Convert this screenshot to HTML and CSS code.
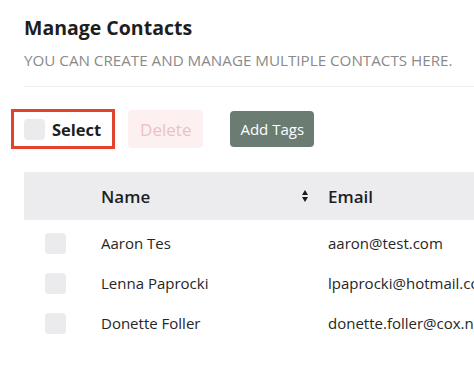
FILE: index.html
```html
<!DOCTYPE html>
<html>
<head>
<meta charset="utf-8">
<link rel="stylesheet" href="styles.css">
</head>
<body>
<main class="page">
  <header class="intro">
    <h1 class="title">Manage Contacts</h1>
    <p class="subtitle">YOU CAN CREATE AND MANAGE MULTIPLE CONTACTS HERE.</p>
  </header>
  <div class="toolbar">
    <label class="select-all"><span class="check"></span><span class="select-label">Select</span></label>
    <button class="btn btn-delete">Delete</button>
    <button class="btn btn-tags">Add Tags</button>
  </div>
  <div class="table">
    <div class="row head">
      <div class="cell"></div>
      <div class="cell name-head">Name
        <svg class="sort" width="6" height="12" viewBox="0 0 6 12"><path d="M3 0 L6 5 L0 5 Z M0 7 L6 7 L3 12 Z" fill="#1b1b1b"/></svg>
      </div>
      <div class="cell">Email</div>
    </div>
    <div class="row">
      <div class="cell"><span class="check"></span></div>
      <div class="cell">Aaron Tes</div>
      <div class="cell">aaron@test.com</div>
    </div>
    <div class="row">
      <div class="cell"><span class="check"></span></div>
      <div class="cell">Lenna Paprocki</div>
      <div class="cell">lpaprocki@hotmail.com</div>
    </div>
    <div class="row">
      <div class="cell"><span class="check"></span></div>
      <div class="cell">Donette Foller</div>
      <div class="cell">donette.foller@cox.net</div>
    </div>
  </div>
</main>
</body>
</html>
```
FILE: styles.css
```css
html, body {
  margin: 0;
  padding: 0;
  background: #ffffff;
}
body {
  font-family: "Open Sans", "Noto Sans", sans-serif;
  color: #222;
  width: 474px;
  height: 372px;
  overflow: hidden;
}
.page {
  padding: 13px 0 0 24px;
  width: 600px;
}
.intro {
  border-bottom: 1px solid #f0f0f0;
  padding-bottom: 16px;
}
.title {
  margin: 0;
  font-size: 19.5px;
  line-height: 30px;
  font-weight: 700;
  color: #1e1e1e;
}
.subtitle {
  margin: 7px 0 0 0;
  font-size: 15.2px;
  line-height: 20px;
  color: #8a8a8a;
  font-weight: 400;
}
.toolbar {
  display: flex;
  align-items: center;
  margin-top: 22px;
  height: 40px;
}
.select-all {
  display: flex;
  align-items: center;
  gap: 7px;
  margin-left: -13px;
  border: 3px solid #e2432c;
  padding: 0 11px 0 10px;
  height: 34px;
}
.check {
  display: inline-block;
  width: 21px;
  height: 21px;
  border-radius: 4px;
  background: #ebebee;
}
.select-label {
  font-size: 16.5px;
  font-weight: 700;
  color: #1e1e1e;
}
.btn {
  font-family: "Open Sans", "Noto Sans", sans-serif;
  border: none;
  border-radius: 4px;
  padding: 0;
}
.btn-delete {
  margin-left: 13px;
  width: 75px;
  height: 38px;
  font-size: 17px;
  background: #fcf0f0;
  color: #eac3c3;
}
.btn-tags {
  margin-left: 27px;
  width: 84px;
  height: 36px;
  font-size: 15px;
  background: #6b7c73;
  color: #ffffff;
}
.table {
  margin-top: 23px;
}
.row {
  display: grid;
  grid-template-columns: 77px 227px 1fr;
  align-items: center;
  height: 40px;
  font-size: 15px;
  color: #262626;
}
.row.head {
  height: 48px;
  background: #ececef;
  font-size: 17px;
  font-weight: 600;
  color: #1e1e1e;
  margin-bottom: 3px;
}
.row .cell:first-child {
  padding-left: 21px;
  display: flex;
  align-items: center;
}
.name-head {
  display: flex;
  align-items: center;
  justify-content: space-between;
  padding-right: 20px;
}
.sort {
  display: block;
}
```
